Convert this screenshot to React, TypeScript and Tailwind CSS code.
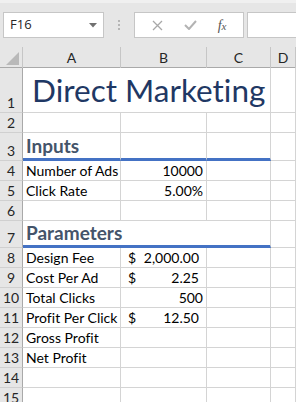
import React from 'react'

const GRID = 'grid grid-cols-[23px_98px_86px_64px_1fr]'
const CELL_FONT = { fontFamily: 'Lato, "Liberation Sans", sans-serif' }

type Row = {
  n: number
  h: string
  cells: React.ReactNode
}

function RowHead({ n }: { n: number }) {
  return (
    <div className="flex items-end justify-center bg-[#e6e6e6] border-r border-r-[#a9a9a9] border-b border-b-[#d0d0d0] pb-[1px] text-[14px] leading-[17px] text-[#262626]">
      {n}
    </div>
  )
}

const cell = 'border-r border-b border-[#d4d4d4] flex items-end pb-[1px] leading-[17px] whitespace-nowrap'
const blue = 'border-r border-r-[#d4d4d4] border-b-[3px] border-b-[#4472c4] flex items-end whitespace-nowrap'

function Label({ children }: { children?: React.ReactNode }) {
  return <div className={`${cell} pl-[3px]`}>{children}</div>
}

function Num({ children }: { children?: React.ReactNode }) {
  return <div className={`${cell} justify-end pr-[3px]`}>{children}</div>
}

function Money({ v }: { v: string }) {
  return (
    <div className={`${cell} justify-between pl-[7px] pr-[7px]`}>
      <span>$</span>
      <span>{v}</span>
    </div>
  )
}

function Empty() {
  return <div className={cell} />
}

function Heading({ text, span }: { text: string; span?: boolean }) {
  return (
    <div className={`${blue} ${span ? 'col-span-2 border-r-0' : ''} pl-[3px] pb-[1px] text-[19px] leading-[22px] font-bold text-[#44546a]`}>
      {text}
    </div>
  )
}

const rows: Row[] = [
  {
    n: 1,
    h: 'h-[45px]',
    cells: (
      <>
        <div className={`${cell} col-span-3 pl-[9px] pb-[4px] text-[31.5px] leading-[36px] font-normal text-[#1f3864]`}>Direct Marketing</div>
        <Empty />
      </>
    ),
  },
  { n: 2, h: 'h-[20px]', cells: (<><Empty /><Empty /><Empty /><Empty /></>) },
  {
    n: 3,
    h: 'h-[28px]',
    cells: (
      <>
        <Heading text="Inputs" />
        <div className={blue} />
        <div className={blue} />
        <Empty />
      </>
    ),
  },
  { n: 4, h: 'h-[20px]', cells: (<><Label>Number of Ads</Label><Num>10000</Num><Empty /><Empty /></>) },
  { n: 5, h: 'h-[20px]', cells: (<><Label>Click Rate</Label><Num>5.00%</Num><Empty /><Empty /></>) },
  { n: 6, h: 'h-[20px]', cells: (<><Empty /><Empty /><Empty /><Empty /></>) },
  {
    n: 7,
    h: 'h-[27px]',
    cells: (
      <>
        <Heading text="Parameters" span />
        <div className={blue} />
        <Empty />
      </>
    ),
  },
  { n: 8, h: 'h-[20px]', cells: (<><Label>Design Fee</Label><Money v="2,000.00" /><Empty /><Empty /></>) },
  { n: 9, h: 'h-[20px]', cells: (<><Label>Cost Per Ad</Label><Money v="2.25" /><Empty /><Empty /></>) },
  { n: 10, h: 'h-[20px]', cells: (<><Label>Total Clicks</Label><Num>500</Num><Empty /><Empty /></>) },
  { n: 11, h: 'h-[20px]', cells: (<><Label>Profit Per Click</Label><Money v="12.50" /><Empty /><Empty /></>) },
  { n: 12, h: 'h-[20px]', cells: (<><Label>Gross Profit</Label><Empty /><Empty /><Empty /></>) },
  { n: 13, h: 'h-[20px]', cells: (<><Label>Net Profit</Label><Empty /><Empty /><Empty /></>) },
  { n: 14, h: 'h-[20px]', cells: (<><Empty /><Empty /><Empty /><Empty /></>) },
  { n: 15, h: 'h-[20px]', cells: (<><Empty /><Empty /><Empty /><Empty /></>) },
]

function FormulaBar() {
  return (
    <div className="h-[47px] bg-[#e6e6e6] border-t-[3px] border-t-[#f0f0f0] pt-[9px] pl-[3px] flex items-start">
      {/* name box */}
      <div className="w-[101px] h-[26px] bg-white border border-[#c6c6c6] flex items-center justify-between pl-[6px] pr-[6px]">
        <span className="text-[13px] text-[#262626]" style={{ fontFamily: '"Open Sans", sans-serif' }}>F16</span>
        <svg width="8" height="5" viewBox="0 0 8 5">
          <path d="M0 0h8L4 4.5z" fill="#707070" />
        </svg>
      </div>
      <div className="w-[30px] h-[26px] flex items-center justify-center">
        <svg width="2" height="10" viewBox="0 0 2 10">
          <rect x="0" y="0" width="2" height="2" fill="#b5b5b5" />
          <rect x="0" y="4" width="2" height="2" fill="#b5b5b5" />
          <rect x="0" y="8" width="2" height="2" fill="#b5b5b5" />
        </svg>
      </div>
      {/* cancel / enter / fx */}
      <div className="w-[110px] h-[26px] bg-white border border-[#c6c6c6] flex items-center justify-around px-[6px]">
        <svg width="11" height="11" viewBox="0 0 11 11">
          <path d="M1 1l9 9M10 1l-9 9" stroke="#a8a8a8" strokeWidth="1.3" />
        </svg>
        <svg width="13" height="10" viewBox="0 0 13 10">
          <path d="M1 5l4 4 7-8" stroke="#b3b3b3" strokeWidth="2" fill="none" />
        </svg>
        <span className="text-[14px] italic text-[#555]" style={{ fontFamily: '"Liberation Serif", serif' }}>
          f<span className="text-[11px]">x</span>
        </span>
      </div>
      <div className="ml-[3px] flex-1 h-[26px] bg-white border border-[#c6c6c6] border-r-0" />
    </div>
  )
}

function ColumnHeader() {
  const letters = ['A', 'B', 'C', 'D']
  return (
    <div className={`${GRID} h-[21px] bg-[#e6e6e6] border-b border-b-[#a9a9a9]`}>
      <div className="relative border-r border-r-[#c6c6c6]">
        <svg className="absolute right-[3px] bottom-[3px]" width="13" height="13" viewBox="0 0 13 13">
          <path d="M13 0v13H0z" fill="#b9b9b9" />
        </svg>
      </div>
      {letters.map((l) => (
        <div key={l} className="flex items-center justify-center border-r border-r-[#c6c6c6] text-[14px] text-[#262626]">
          {l}
        </div>
      ))}
    </div>
  )
}

export default function App() {
  return (
    <div className="w-[296px] h-[402px] overflow-hidden bg-white [font-variant-ligatures:none]" style={CELL_FONT}>
      <FormulaBar />
      <ColumnHeader />
      {rows.map((r) => (
        <div key={r.n} className={`${GRID} ${r.h} text-[14px] text-black`}>
          <RowHead n={r.n} />
          {r.cells}
        </div>
      ))}
    </div>
  )
}
